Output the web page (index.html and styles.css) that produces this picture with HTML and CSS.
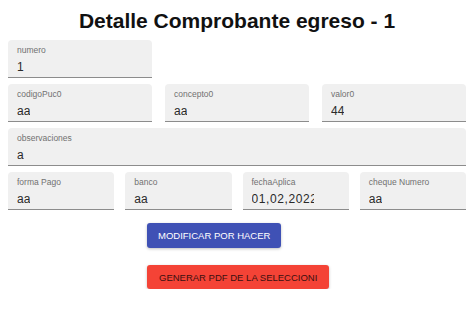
FILE: index.html
```html
<!DOCTYPE html>
<html>
<head>
<meta charset="utf-8">
<link rel="stylesheet" href="styles.css">
</head>
<body>
<h1 class="title">Detalle Comprobante egreso - 1</h1>
<div class="grid three">
  <div class="field"><span class="label">numero</span><span class="value">1</span></div>
</div>
<div class="grid three">
  <div class="field"><span class="label">codigoPuc0</span><span class="value">aa</span></div>
  <div class="field"><span class="label">concepto0</span><span class="value">aa</span></div>
  <div class="field"><span class="label">valor0</span><span class="value">44</span></div>
</div>
<div class="grid one">
  <div class="field"><span class="label">observaciones</span><span class="value">a</span></div>
</div>
<div class="grid four">
  <div class="field"><span class="label">forma Pago</span><span class="value">aa</span></div>
  <div class="field"><span class="label">banco</span><span class="value">aa</span></div>
  <div class="field"><span class="label">fechaAplica</span><span class="value date">01,02,2022</span></div>
  <div class="field"><span class="label">cheque Numero</span><span class="value">aa</span></div>
</div>
<div class="actions">
  <button class="btn blue">MODIFICAR POR HACER</button>
  <button class="btn red">GENERAR PDF DE LA SELECCIONI</button>
</div>
</body>
</html>
```
FILE: styles.css
```css
html, body {
  margin: 0;
  padding: 0;
  background: #ffffff;
}
body {
  padding: 0 8px;
  font-family: "Liberation Sans", Arial, sans-serif;
}
.title {
  margin: 0;
  padding-top: 9px;
  height: 40px;
  box-sizing: border-box;
  text-align: center;
  font-size: 21px;
  font-weight: bold;
  line-height: 24px;
  color: #111;
}
.grid {
  display: grid;
  margin-bottom: 6px;
}
.grid.three {
  grid-template-columns: repeat(3, 1fr);
  column-gap: 13px;
}
.grid.four {
  grid-template-columns: repeat(4, 1fr);
  column-gap: 11px;
}
.grid.one {
  grid-template-columns: 1fr;
}
.field {
  background: #f0f0f0;
  border-radius: 4px 4px 0 0;
  border-bottom: 1px solid #8c8c8c;
  height: 38px;
  box-sizing: border-box;
  padding: 5px 9px 0;
  display: flex;
  flex-direction: column;
  align-items: flex-start;
  min-width: 0;
}
.label {
  font-size: 8.5px;
  line-height: 11px;
  color: #707070;
}
.value {
  margin-top: 4px;
  font-size: 12px;
  line-height: 14px;
  color: #2a2a2a;
  white-space: nowrap;
  overflow: hidden;
  max-width: 100%;
}
.value.date {
  letter-spacing: 0.6px;
  max-width: 62px;
}
.actions {
  display: flex;
  flex-direction: column;
  align-items: flex-start;
  padding-left: 139px;
  padding-top: 7px;
  gap: 17px;
}
.btn {
  border: none;
  border-radius: 3px;
  font-family: "Liberation Sans", Arial, sans-serif;
  font-size: 9.5px;
  height: 25px;
  padding: 0 11px;
  box-shadow: 0 1px 3px rgba(0,0,0,0.25);
}
.btn.blue {
  background: #3f51b5;
  color: #fff;
}
.btn.red {
  background: #f44336;
  color: #3b1010;
  height: 24px;
  padding: 0 12px;
}
```
